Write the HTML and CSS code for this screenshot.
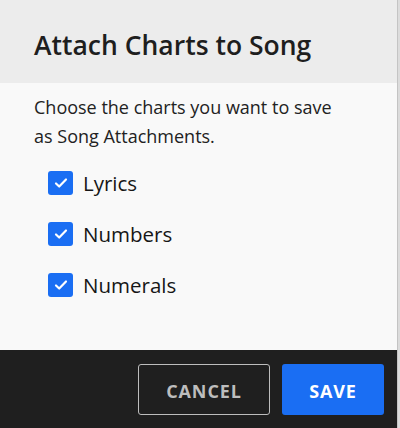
FILE: index.html
```html
<!DOCTYPE html>
<html lang="en">
<head>
    <meta charset="UTF-8">
    <title>Attach Charts to Song</title>
    <link rel="stylesheet" href="styles.css">
</head>
<body>

<div class="dialog">
    <div class="dialog-header">
        <h2>Attach Charts to Song</h2>
    </div>

    <div class="dialog-body">
        <p>Choose the charts you want to save as Song Attachments.</p>
        <label class="chart-option">
            <span class="check">
                <svg width="16" height="16" viewBox="0 0 16 16"><path d="M3 8.5l3.2 3L13 4.5" fill="none" stroke="#fff" stroke-width="2.2" stroke-linecap="round" stroke-linejoin="round"/></svg>
            </span>
            Lyrics
        </label>
        <label class="chart-option">
            <span class="check">
                <svg width="16" height="16" viewBox="0 0 16 16"><path d="M3 8.5l3.2 3L13 4.5" fill="none" stroke="#fff" stroke-width="2.2" stroke-linecap="round" stroke-linejoin="round"/></svg>
            </span>
            Numbers
        </label>
        <label class="chart-option">
            <span class="check">
                <svg width="16" height="16" viewBox="0 0 16 16"><path d="M3 8.5l3.2 3L13 4.5" fill="none" stroke="#fff" stroke-width="2.2" stroke-linecap="round" stroke-linejoin="round"/></svg>
            </span>
            Numerals
        </label>
    </div>

    <div class="dialog-footer">
        <button class="btn-cancel">CANCEL</button>
        <button class="btn-save">SAVE</button>
    </div>
</div>

</body>
</html>
```

FILE: styles.css
```css
body {
    margin: 0;
    font-family: 'Open Sans', sans-serif;
    background-color: #dcdcdc;
    color: #1c1c1c;
}
.dialog {
    width: 397px;
    height: 428px;
    display: flex;
    flex-direction: column;
    border-right: 1px solid #c4c4c4;
}
.dialog-header {
    background-color: #ececec;
    height: 83px;
    box-sizing: border-box;
    padding: 29px 34px 0;
}
.dialog-header h2 {
    margin: 0;
    font-size: 26.5px;
    line-height: 32px;
    font-weight: 600;
    color: #1e1e1e;
}
.dialog-body {
    background-color: #f9f9f9;
    flex: 1;
    padding: 10px 34px 0;
}
.dialog-body p {
    margin: 0 0 20px;
    font-size: 18px;
    line-height: 29px;
    color: #222;
    max-width: 318px;
}
.chart-option {
    display: flex;
    align-items: center;
    gap: 10px;
    height: 24px;
    margin: 0 0 27px 14px;
    font-size: 20.5px;
    color: #161616;
}
.check {
    width: 25px;
    height: 24px;
    border-radius: 3px;
    background-color: #1a6ef3;
    display: flex;
    align-items: center;
    justify-content: center;
}
.dialog-footer {
    background-color: #1f1f1f;
    height: 78px;
    box-sizing: border-box;
    padding: 14px 13px 0 0;
    display: flex;
    justify-content: flex-end;
    align-items: flex-start;
    gap: 12px;
}
.dialog-footer button {
    height: 51px;
    padding: 3px 0 0;
    font-family: 'Open Sans', sans-serif;
    font-size: 18px;
    font-weight: 700;
    letter-spacing: 0.9px;
    border-radius: 3px;
    cursor: pointer;
}
.btn-cancel {
    width: 132px;
    background-color: #1f1f1f;
    color: #bdbdbd;
    border: 1.5px solid #bdbdbd;
}
.btn-save {
    width: 102px;
    background-color: #1a6ef3;
    color: #fff;
    border: none;
}
```
